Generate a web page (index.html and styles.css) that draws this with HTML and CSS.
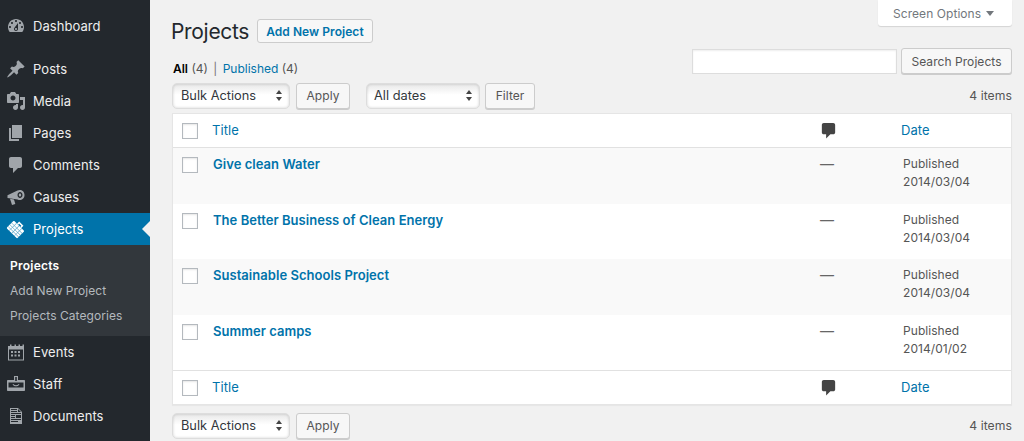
FILE: index.html
```html
<!DOCTYPE html>
<html lang="en">
<head>
<meta charset="utf-8">
<title>Projects</title>
<link rel="stylesheet" href="styles.css">
</head>
<body>
<div class="app">
  <nav class="sidebar">
    <ul class="menu">
      <li class="item first"><svg class="ico" viewBox="0 0 20 20"><path d="M3.76 16h12.48c1.1-1.37 1.76-3.11 1.76-5 0-4.42-3.58-8-8-8s-8 3.58-8 8c0 1.89.66 3.63 1.76 5zM10 4c.55 0 1 .45 1 1s-.45 1-1 1-1-.45-1-1 .45-1 1-1zM6 6c.55 0 1 .45 1 1s-.45 1-1 1-1-.45-1-1 .45-1 1-1zm8 0c.55 0 1 .45 1 1s-.45 1-1 1-1-.45-1-1 .45-1 1-1zm-5.37 5.55L12 7v6c0 1.1-.9 2-2 2s-2-.9-2-2c0-.57.24-1.08.63-1.45zM4 10c.55 0 1 .45 1 1s-.45 1-1 1-1-.45-1-1 .45-1 1-1zm12 0c.55 0 1 .45 1 1s-.45 1-1 1-1-.45-1-1 .45-1 1-1zm-5 3c0-.55-.45-1-1-1s-1 .45-1 1 .45 1 1 1 1-.45 1-1z" fill-rule="evenodd"/></svg>Dashboard</li>
      <li class="item sep"><svg class="ico" viewBox="0 0 20 20"><path d="M10.44 3.02l1.82-1.82 6.36 6.35-1.83 1.82c-1.05-.68-2.48-.57-3.41.36l-.75.75c-.92.93-1.04 2.35-.35 3.41l-1.83 1.82-2.41-2.41-2.8 2.79c-.42.42-3.38 2.71-3.8 2.29s1.86-3.39 2.28-3.81l2.79-2.79L4.1 9.36l1.83-1.82c1.05.69 2.48.57 3.4-.36l.75-.75c.93-.92 1.05-2.35.36-3.41z"/></svg>Posts</li>
      <li class="item"><svg class="ico" viewBox="0 0 20 20"><path d="M13 11V4c0-.55-.45-1-1-1h-1.67L9 1H5L3.67 3H2c-.55 0-1 .45-1 1v7c0 .55.45 1 1 1h10c.55 0 1-.45 1-1zM7 4.5c1.38 0 2.5 1.12 2.5 2.5S8.38 9.5 7 9.5 4.5 8.38 4.5 7 5.62 4.5 7 4.5zM14 6h5v10.5c0 1.38-1.12 2.5-2.5 2.5S14 17.88 14 16.5s1.12-2.5 2.5-2.5c.17 0 .34.02.5.05V9h-3V6zm-4 8.05V13h2v3.5c0 1.38-1.12 2.5-2.5 2.5S7 17.88 7 16.5 8.12 14 9.5 14c.17 0 .34.02.5.05z" fill-rule="evenodd"/></svg>Media</li>
      <li class="item"><svg class="ico" viewBox="0 0 20 20"><path d="M6 15V2h10v13H6zm-1 1h8v2H3V5h2v11z"/></svg>Pages</li>
      <li class="item"><svg class="ico" viewBox="0 0 20 20"><path d="M5 2h9c1.1 0 2 .9 2 2v7c0 1.1-.9 2-2 2h-2l-5 5v-5H5c-1.1 0-2-.9-2-2V4c0-1.1.9-2 2-2z"/></svg>Comments</li>
      <li class="item"><svg class="ico" viewBox="0 0 20 20"><path fill-rule="evenodd" d="M1.500 8.300L11.500 3.500C14.500 1.800 18.500 3.800 18.500 8S14.500 14 11.500 12.500L1.500 11zM14 5c-1.400 0-2.500 1.400-2.500 3s1.100 3 2.500 3 2.500-1.400 2.500-3-1.100-3-2.500-3zM14 6.500c.7 0 1.200.7 1.200 1.500s-.5 1.500-1.200 1.500-1.200-.7-1.200-1.500.5-1.500 1.200-1.500z"/><path d="M4 11.800l4 .7 1.300 4.500-3.300.9z"/></svg>Causes</li>
      <li class="item active"><svg class="ico" viewBox="0 0 20 20"><g transform="rotate(45 10 10)"><path d="M3.500 5.500h13c.6 0 1 .4 1 1v8.500c0 .6-.4 1-1 1h-13c-.6 0-1-.4-1-1V6.500c0-.6.4-1 1-1z"/><path d="M7 5.500V2.500h6v3h-1.500V4h-3v1.500z"/><path class="cut" d="M2.500 8.500h15v.6h-15zM2.500 11h15v.6h-15zM2.500 13.500h15v.6h-15zM6 5.500h.6V16H6zM9.700 5.500h.6V16h-.6zM13.400 5.500h.6V16h-.6z"/></g></svg>Projects</li>
      <li class="submenu">
        <span class="sub current">Projects</span>
        <span class="sub">Add New Project</span>
        <span class="sub">Projects Categories</span>
      </li>
      <li class="item"><svg class="ico" viewBox="0 0 20 20"><path fill-rule="evenodd" d="M2 4h2V2.500h1.500V4h3V2.500H10V4h2.500V2.500H14V4h2.500V2.500H18V4h0v14.500H2V4zm1 3.500V17.500h14V7.500H3zM5 9h2v2H5zm3.500 0h2v2h-2zM12 9h2v2h-2zM5 12.500h2v2H5zm3.500 0h2v2h-2zm3.500 0h2v2h-2z"/></svg>Events</li>
      <li class="item"><svg class="ico" viewBox="0 0 20 20"><path fill-rule="evenodd" d="M8 2h4v4h6c.6 0 1 .4 1 1v9c0 .6-.4 1-1 1H2c-.6 0-1-.4-1-1V7c0-.6.4-1 1-1h6V2zm1.200 1v4h1.600V3H9.200zM2.500 8.500v5h15v-5h-15zM6.500 10.500c1 1.300 2.200 1.800 3.500 1.800s2.500-.5 3.500-1.800l-.8-.5c-.8.900-1.700 1.300-2.700 1.300s-1.900-.4-2.700-1.300l-.8.500z"/></svg>Staff</li>
      <li class="item"><svg class="ico" viewBox="0 0 20 20"><path d="M12 2l4 4v12H4V2h8zM5 3v1h6V3H5zm7 3h3l-3-3v3zM5 5v1h6V5H5zm10 3V7H5v1h10zM5 9v1h4V9H5zm10 3V9h-5v3h5zM5 11v1h4v-1H5zm10 3v-1H5v1h10zm-3 2v-1H5v1h7z"/></svg>Documents</li>
    </ul>
  </nav>
  <main class="content">
    <div class="head-row">
      <h1 class="page-title">Projects</h1>
      <a class="btn add-new">Add New Project</a>
      <a class="screen-options">Screen Options <span class="caret"></span></a>
    </div>
    <div class="filter-row">
      <p class="views"><b>All</b> <span class="count">(4)</span> <span class="bar">|</span> <a>Published</a> <span class="count">(4)</span></p>
      <div class="search"><input class="search-input" type="text" aria-label="Search"><a class="btn">Search Projects</a></div>
    </div>
    <div class="tablenav top">
      <span class="select bulk">Bulk Actions<i class="arrows"></i></span>
      <a class="btn apply">Apply</a>
      <span class="select dates">All dates<i class="arrows"></i></span>
      <a class="btn filter">Filter</a>
      <span class="items">4 items</span>
    </div>
    <div class="list">
      <div class="row headrow">
        <span class="check"></span><a class="title-h">Title</a>
        <svg class="bubble" viewBox="0 0 20 20"><path d="M5 2h10c1.100 0 2 .9 2 2v8c0 1.100-.9 2-2 2h-3l-4.500 4.500V14H5c-1.100 0-2-.9-2-2V4c0-1.100.9-2 2-2z"/></svg>
        <a class="date-h">Date</a>
      </div>
      <div class="row data alt">
        <span class="check"></span><a class="name">Give clean Water</a><span class="dash">—</span><span class="date">Published<br>2014/03/04</span>
      </div>
      <div class="row data">
        <span class="check"></span><a class="name">The Better Business of Clean Energy</a><span class="dash">—</span><span class="date">Published<br>2014/03/04</span>
      </div>
      <div class="row data alt">
        <span class="check"></span><a class="name">Sustainable Schools Project</a><span class="dash">—</span><span class="date">Published<br>2014/03/04</span>
      </div>
      <div class="row data">
        <span class="check"></span><a class="name">Summer camps</a><span class="dash">—</span><span class="date">Published<br>2014/01/02</span>
      </div>
      <div class="row footrow">
        <span class="check"></span><a class="title-h">Title</a>
        <svg class="bubble" viewBox="0 0 20 20"><path d="M5 2h10c1.100 0 2 .9 2 2v8c0 1.100-.9 2-2 2h-3l-4.500 4.500V14H5c-1.100 0-2-.9-2-2V4c0-1.100.9-2 2-2z"/></svg>
        <a class="date-h">Date</a>
      </div>
    </div>
    <div class="tablenav bottom">
      <span class="select bulk">Bulk Actions<i class="arrows"></i></span>
      <a class="btn apply">Apply</a>
      <span class="items">4 items</span>
    </div>
  </main>
</div>
</body>
</html>
```
FILE: styles.css
```css
* { box-sizing: border-box; }
html, body { margin: 0; height: 441px; overflow: hidden; }
body { font-family: "Inter", "Liberation Sans", sans-serif; font-size: 13px; color: #555; background: #f1f1f1; }
.app { display: flex; height: 441px; overflow: hidden; }

.sidebar { width: 150px; flex: none; background: #23282d; color: #eee; }
.menu { list-style: none; margin: 0; padding: 10px 0 0; }
.item { display: flex; align-items: center; height: 32px; font-size: 13px; letter-spacing: .005em; }
.item.sep { margin-top: 11px; }
.ico { width: 20px; height: 20px; margin: 0 7px 0 6px; fill: #a0a5aa; flex: none; }
.item.active { position: relative; background: #0073aa; color: #fff; }
.item.active .ico { fill: #fff; }
.item.active .cut { fill: #5aa5c8; }
.item.active::after { content: ""; position: absolute; right: 0; top: 8px; border: 8px solid transparent; border-right-color: #f1f1f1; border-left-width: 0; }
.submenu { display: flex; flex-direction: column; background: #32373c; height: 91px; padding: 8px 0 0 10px; }
.sub { height: 25px; line-height: 25px; font-size: 12px; color: #b4b9be; letter-spacing: .005em; }
.sub.current { color: #fff; font-weight: 600; letter-spacing: .02em; }

.content { flex: 1; min-width: 0; padding: 0 12px 0 22px; }
.head-row { display: flex; align-items: flex-start; height: 48px; }
.page-title { margin: 17px 0 0 -1px; font-size: 21px; line-height: 29px; font-weight: 400; color: #23282d; letter-spacing: -.015em; }
.btn { display: inline-flex; align-items: center; justify-content: center; height: 26px; padding: 0 10px; background: #f7f7f7; border: 1px solid #ccc; border-radius: 3px; box-shadow: 0 1px 0 #ccc; color: #555; font-size: 12px; letter-spacing: .005em; }
.add-new { margin: 19px 0 0 8px; height: 24px; padding: 0 8px; color: #0073aa; font-weight: 600; box-shadow: none; }
.screen-options { display: flex; align-items: center; gap: 5px; margin-left: auto; width: 134px; height: 26px; padding-left: 15px; background: #fff; box-shadow: 0 1px 1px rgba(0,0,0,.12); border-radius: 0 0 3px 3px; color: #72777c; font-size: 12px; letter-spacing: .005em; }
.caret { border: 4px solid transparent; border-top: 5px solid #72777c; border-bottom-width: 0; }

.filter-row { display: flex; justify-content: space-between; height: 34px; }
.views { margin: 14px 0 0 1px; font-size: 12px; line-height: 14px; color: #555; letter-spacing: 0; }
.views b { color: #000; font-weight: 600; }
.views a { color: #0073aa; }
.views .bar { color: #777; margin: 0 2px; }
.search { display: flex; gap: 4px; }
.search-input { width: 205px; height: 25px; margin: 1px 0 0; padding: 0; background: #fff; border: 1px solid #ddd; box-shadow: inset 0 1px 2px rgba(0,0,0,.07); }
.search .btn { width: 111px; padding: 0; }

.tablenav { display: flex; align-items: center; height: 27px; }
.tablenav.top { margin-bottom: 4px; }
.tablenav.bottom { margin-top: 7px; }
.select { display: flex; align-items: center; justify-content: space-between; height: 26px; padding: 0 6px 0 8px; background: linear-gradient(#e8e8e8, #fff 45%, #fff); border: 1px solid #ddd; border-radius: 5px; box-shadow: inset 0 0 3px rgba(0,0,0,.18); color: #32373c; font-size: 12.800px; }
.bulk { width: 118px; }
.dates { width: 114px; margin-left: 16px; padding-left: 7px; }
.arrows { display: block; width: 7px; height: 11px; position: relative; }
.arrows::before, .arrows::after { content: ""; position: absolute; left: 0; border: 3.500px solid transparent; }
.arrows::before { top: 0; border-bottom: 4px solid #444; border-top-width: 0; }
.arrows::after { bottom: 0; border-top: 4px solid #444; border-bottom-width: 0; }
.apply { width: 54px; margin-left: 6px; }
.filter { width: 50px; margin-left: 5px; }
.items { margin-left: auto; font-size: 12.200px; color: #555; letter-spacing: .005em; }

.list { border: 1px solid #e5e5e5; background: #fff; box-shadow: 0 1px 1px rgba(0,0,0,.04); }
.row { display: grid; grid-template-columns: 39px 607px 82px 1fr; align-items: center; }
.headrow { height: 34px; border-bottom: 1px solid #e1e1e1; }
.footrow { height: 34px; border-top: 1px solid #e1e1e1; }
.data { height: 55.500px; align-items: start; padding-top: 8px; background: #fff; }
.data.alt { background: #f9f9f9; }
.check { width: 16px; height: 16px; margin-left: 9px; background: #fff; border: 1px solid #b4b9be; box-shadow: inset 0 1px 2px rgba(0,0,0,.1); }
.data .check { margin-top: 1px; }
.title-h, .date-h { color: #0073aa; font-size: 13px; letter-spacing: .005em; margin-bottom: 2px; }
.name { color: #0073aa; font-weight: 600; font-size: 13px; letter-spacing: .003em; margin-left: 1px; }
.bubble { width: 19px; height: 19px; fill: #444; }
.dash { color: #666; font-size: 14px; line-height: 16px; padding-left: 1px; }
.date { font-size: 12px; line-height: 18px; color: #555; padding-left: 2px; letter-spacing: .005em; margin-top: -1px; }
```
